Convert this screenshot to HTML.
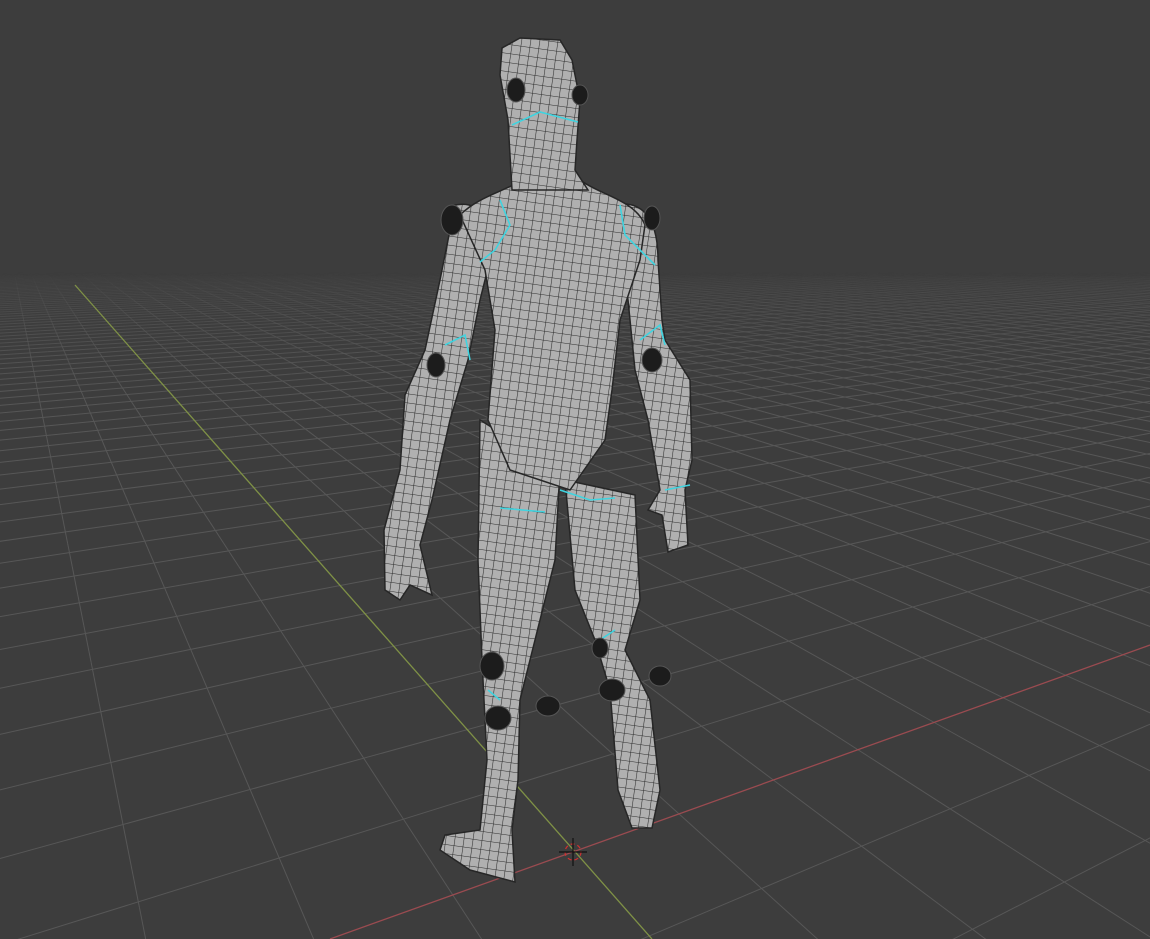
<!DOCTYPE html>
<html><head><meta charset="utf-8"><style>
html,body{margin:0;padding:0;background:#3d3d3d;width:1150px;height:939px;overflow:hidden}
svg{display:block;position:absolute;left:0;top:0}
</style></head><body>
<svg id="s" width="1150" height="939" viewBox="0 0 1150 939" xmlns="http://www.w3.org/2000/svg">
<defs>
<pattern id="mesh" width="9" height="9" patternUnits="userSpaceOnUse" patternTransform="rotate(8)">
<rect width="9" height="9" fill="#b0b0b0"/>
<path d="M0 0H9M0 0V9" stroke="#2e2e2e" stroke-width="1.1"/>
</pattern>
</defs>
<rect width="1150" height="939" fill="#3d3d3d"/>
<g id="grid" stroke="#575757" stroke-width="1" fill="none"></g>
<line x1="75" y1="285" x2="652" y2="939" stroke="#7f9146" stroke-width="1.3"/>
<line x1="330" y1="939" x2="1150" y2="645" stroke="#9a4b50" stroke-width="1.3"/>
<g fill="url(#mesh)" stroke="#262626" stroke-width="1.5">
<path d="M565 480 L635 495 L640 600 L625 650 L650 700 L660 790 L652 828 L632 828 L618 790 L610 690 L595 640 L575 590 Z"/>
<path d="M480 420 L560 470 L555 560 L535 640 L520 700 L518 780 L512 830 L515 882 L470 870 L440 850 L445 835 L480 830 L487 760 L482 660 L478 560 Z"/>
<path d="M455 205 C480 200 495 220 490 260 L480 300 L468 360 L450 420 L432 500 L420 545 L432 595 L410 585 L400 600 L385 590 L384 530 L400 470 L405 395 L425 350 L440 280 Z"/>
<path d="M615 205 C640 200 658 215 658 260 L662 320 L665 340 L690 380 L692 460 L685 490 L688 545 L668 552 L662 515 L648 510 L660 490 L648 420 L635 370 L628 300 Z"/>
<path d="M460 215 C480 195 510 190 520 180 L580 180 C600 195 635 200 645 225 L640 260 L620 320 L612 390 L605 440 L570 490 L510 470 L488 420 L495 330 L485 270 Z"/>
<path d="M512 190 L508 120 L500 75 L502 48 L520 38 L560 40 L572 60 L580 100 L577 140 L575 170 L588 190 Z"/>
</g>
<g fill="none" stroke="#3fd4e0" stroke-width="1.6">
<path d="M512 125 L540 112 L578 122"/>
<path d="M500 200 L510 225 L495 250 L480 262"/>
<path d="M620 205 L625 235 L640 250 L655 265"/>
<path d="M445 345 L465 335 L470 360"/>
<path d="M640 340 L660 325 L665 345"/>
<path d="M560 490 L590 500 L615 498"/>
<path d="M500 508 L545 512"/>
<path d="M665 490 L690 485"/>
<path d="M600 640 L615 630"/>
<path d="M488 690 L500 700"/>
</g>
<g fill="#1c1c1c" stroke="#555" stroke-width="1">
<ellipse cx="516" cy="90" rx="9" ry="12"/>
<ellipse cx="580" cy="95" rx="8" ry="10"/>
<ellipse cx="452" cy="220" rx="11" ry="15"/>
<ellipse cx="652" cy="218" rx="8" ry="12"/>
<ellipse cx="436" cy="365" rx="9" ry="12"/>
<ellipse cx="652" cy="360" rx="10" ry="12"/>
<ellipse cx="492" cy="666" rx="12" ry="14"/>
<ellipse cx="498" cy="718" rx="13" ry="12"/>
<ellipse cx="548" cy="706" rx="12" ry="10"/>
<ellipse cx="612" cy="690" rx="13" ry="11"/>
<ellipse cx="660" cy="676" rx="11" ry="10"/>
<ellipse cx="600" cy="648" rx="8" ry="10"/>
</g>
<g stroke="#d03030" stroke-width="1.2" fill="none">
<circle cx="573" cy="852" r="8" stroke-dasharray="4 3"/>
<path d="M573 838V866M559 852H587" stroke="#111"/>
</g>
</svg>
<script>
(function(){
var g=document.getElementById('grid');
var O=[573,852],V2=[2390,200],V1=[0,200],a=0.062,b=0.115;
function P(X,Y){var d=1+a*X+b*Y;return [(O[0]+a*X*V2[0]+b*Y*V1[0])/d,(O[1]+a*X*V2[1]+b*Y*V1[1])/d,d];}
var s='';
function seg(p,q){
 var N=80;
 for(var k=0;k<N;k++){
  var t0=k/N,t1=(k+1)/N;
  var A=P(p[0]+(q[0]-p[0])*t0,p[1]+(q[1]-p[1])*t0),B=P(p[0]+(q[0]-p[0])*t1,p[1]+(q[1]-p[1])*t1);
  var d=Math.min(A[2],B[2]); if(d<0.15) continue;
  var dm=Math.max(A[2],B[2]); if(dm>9) continue;
  var op=Math.max(0,Math.min(1,(9-dm)/6));
  s+='<line x1="'+A[0].toFixed(1)+'" y1="'+A[1].toFixed(1)+'" x2="'+B[0].toFixed(1)+'" y2="'+B[1].toFixed(1)+'" stroke-opacity="'+op.toFixed(2)+'"/>';
 }
}
for(var i=-40;i<=80;i++){ if(i!==0) seg([i,-15],[i,70]); }
for(var j=-15;j<=70;j++){ if(j!==0) seg([-40,j],[80,j]); }
g.innerHTML=s;
})();
</script>
</body></html>
